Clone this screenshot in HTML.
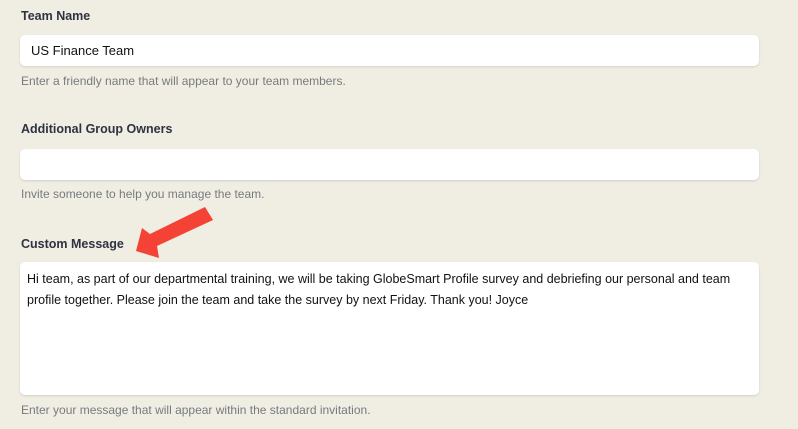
<!DOCTYPE html><html><head><style>
body{margin:0;width:798px;height:429px;background:#f0ede2;font-family:"Liberation Sans",sans-serif;position:relative;overflow:hidden}
.l{position:absolute;left:21px;font-size:12.5px;font-weight:bold;color:#2d3340}
.i{position:absolute;left:20px;width:739px;background:#fff;border-radius:5px;box-shadow:0 1px 2px rgba(0,0,0,.12);font-size:13px;color:#111}
.h{position:absolute;left:21px;font-size:12px;color:#777b80}
</style></head><body>
<div class="l" style="top:9px">Team Name</div>
<div class="i" style="top:35px;height:31px;line-height:31px;padding-left:11px;width:728px">US Finance Team</div>
<div class="h" style="top:74px">Enter a friendly name that will appear to your team members.</div>
<div class="l" style="top:122px">Additional Group Owners</div>
<div class="i" style="top:149px;height:31px"></div>
<div class="h" style="top:187px">Invite someone to help you manage the team.</div>
<div class="l" style="top:237px">Custom Message</div>
<div class="i" style="top:262px;height:133px;padding:7px 6px 8px 7px;box-sizing:border-box;line-height:21px;font-size:12.5px">Hi team, as part of our departmental training, we will be taking GlobeSmart Profile survey and debriefing our personal and team profile together. Please join the team and take the survey by next Friday. Thank you! Joyce</div>
<div class="h" style="top:403px">Enter your message that will appear within the standard invitation.</div>
<svg style="position:absolute;left:0;top:0" width="798" height="429"><polygon points="205,207 213,220 157,246 159,258 136,251 142,228 150,234" fill="#f44336"/></svg>
</body></html>
